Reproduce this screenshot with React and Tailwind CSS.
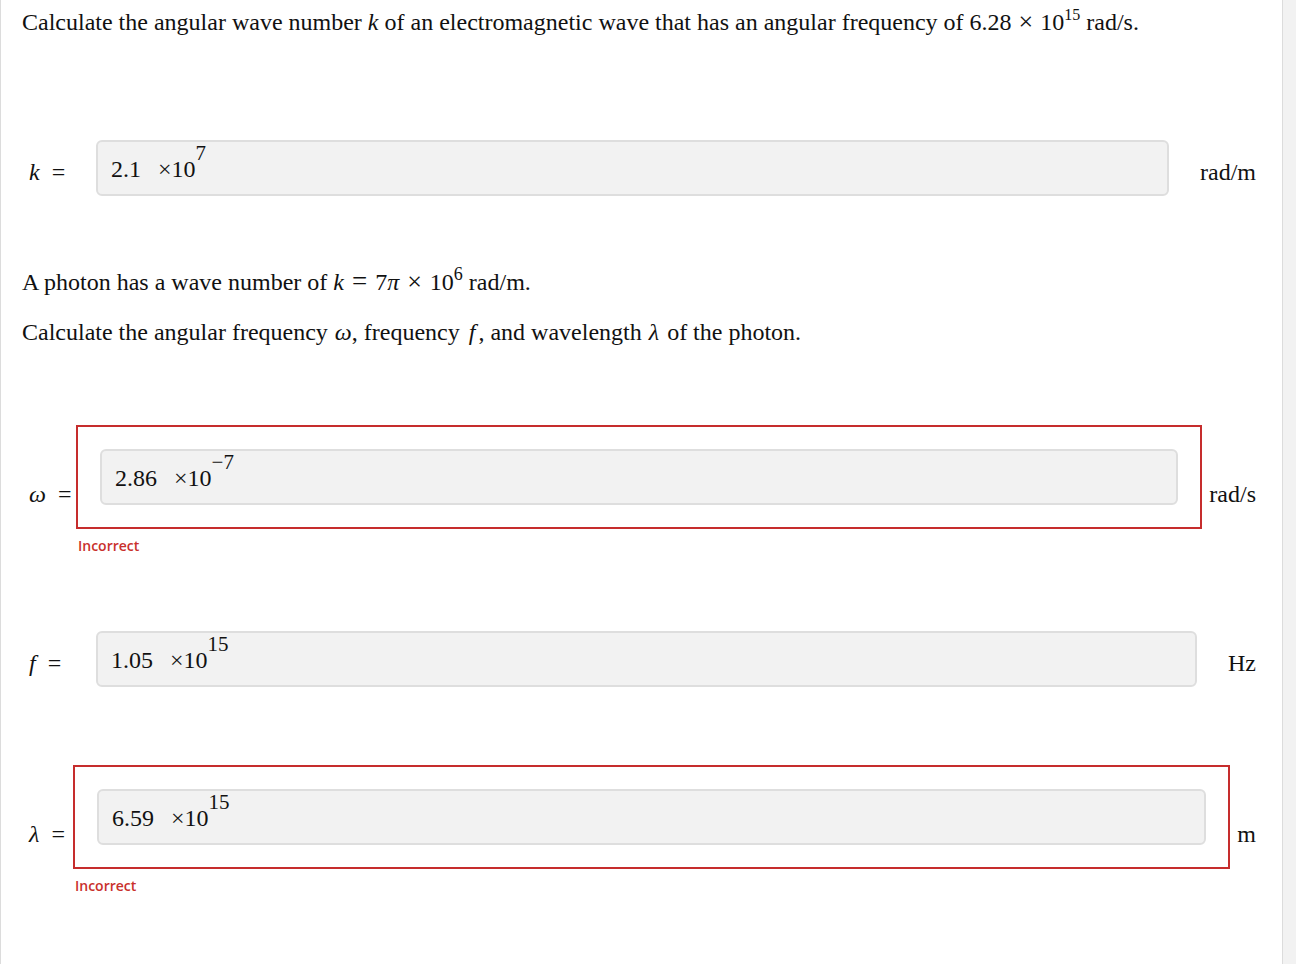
import React from "react";

const serif = { fontFamily: '"Liberation Serif", "Times New Roman", serif' };

function Field({ value, exp }) {
  return (
    <div className="h-[56px] rounded-[6px] border-2 border-[#dedede] bg-[#f2f2f2] flex items-center pl-[13px] text-[24px] text-[#111]">
      <span className="mt-[2px]">{value}</span>
      <span className="ml-[17px] mt-[2px]">×10</span>
      <sup className="text-[21px] top-[-0.72em]">{exp}</sup>
    </div>
  );
}

function Row({ label, value, exp, unit, error, labelW, labelPad, unitPad }) {
  return (
    <div className="flex items-start">
      <div className={`pl-[7px] text-[24px] leading-[28px] whitespace-nowrap shrink-0 ${labelW} ${labelPad}`}>
        {label}
        <span className="ml-[12px]">=</span>
      </div>
      <div className="flex-1 flex flex-col">
        {error ? (
          <div className="border-2 border-[#c62d2d] p-[22px]">
            <Field value={value} exp={exp} />
          </div>
        ) : (
          <div className="px-[24px]">
            <Field value={value} exp={exp} />
          </div>
        )}
        {error && (
          <div
            className="mt-[7px] ml-[2px] text-[14px] leading-[20px] font-semibold text-[#c9302c]"
            style={{ fontFamily: '"Open Sans", "Noto Sans", sans-serif' }}
          >
            Incorrect
          </div>
        )}
      </div>
      <div className={`ml-[7px] text-[24px] leading-[28px] ${unitPad}`}>{unit}</div>
    </div>
  );
}

export default function App() {
  return (
    <div className="min-h-[964px] bg-[#f2f2f2] flex text-[#111]" style={serif}>
      <div className="w-[1283px] min-h-[964px] bg-white border-l border-r border-[#dcdcdc] pl-[21px] pr-[26px] pt-[8px]">
        <p className="text-[24px] leading-[28px]">
          Calculate the angular wave number <i>k</i> of an electromagnetic wave that has an angular frequency of 6.28{" "}
          <span className="mx-[1px] text-[26px] leading-[20px]">×</span> 10
          <sup className="text-[16px] top-[-0.6em]">15</sup> rad/s.
        </p>

        <div className="mt-[104px]">
          <Row label={<i>k</i>} value="2.1" exp="7" unit="rad/m" labelW="w-[50px]" labelPad="pt-[18px]" unitPad="pt-[18px]" />
        </div>

        <p className="mt-[72px] text-[24px] leading-[28px]">
          A photon has a wave number of <i>k</i>{" "}
          <span className="mx-[2px] text-[27px] leading-[20px]">=</span> 7<i>π</i>{" "}
          <span className="mx-[2px] text-[26px] leading-[20px]">×</span> 10
          <sup className="text-[18px] top-[-0.55em]">6</sup> rad/m.
        </p>
        <p className="mt-[22px] text-[24px] leading-[28px]">
          Calculate the angular frequency <i className="ml-[1px]">ω</i>, frequency <i className="mx-[3px]">f</i>, and wavelength{" "}
          <i className="ml-[1px] mr-[2px]">λ</i> of the photon.
        </p>

        <div className="mt-[79px]">
          <Row label={<i>ω</i>} value="2.86" exp="−7" unit="rad/s" error labelW="w-[54px]" labelPad="pt-[55px]" unitPad="pt-[55px]" />
        </div>

        <div className="mt-[75px]">
          <Row label={<i>f</i>} value="1.05" exp="15" unit="Hz" labelW="w-[50px]" labelPad="pt-[18px]" unitPad="pt-[18px]" />
        </div>

        <div className="mt-[78px]">
          <Row label={<i>λ</i>} value="6.59" exp="15" unit="m" error labelW="w-[51px]" labelPad="pt-[55px]" unitPad="pt-[55px]" />
        </div>
      </div>
    </div>
  );
}
